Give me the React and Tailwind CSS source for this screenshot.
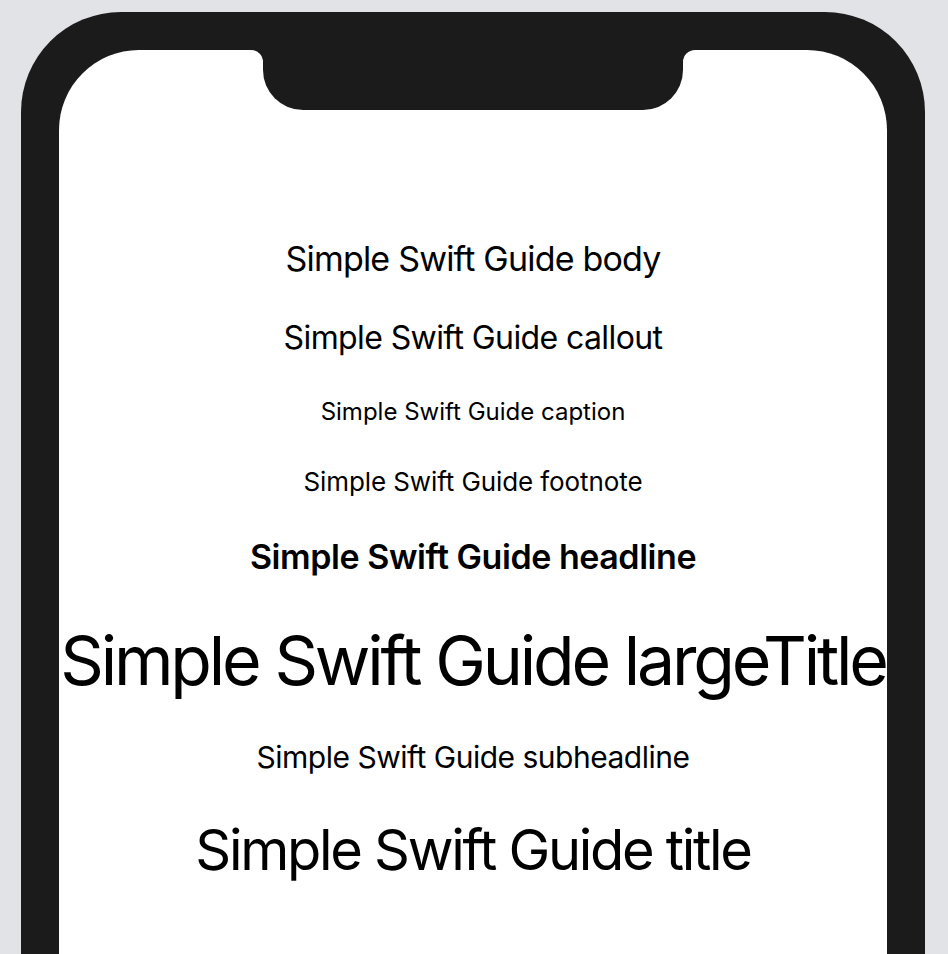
const lines = [
  { text: 'Simple Swift Guide body', cls: 'text-[34px] leading-[44px] mt-[187px] tracking-[-0.8px]' },
  { text: 'Simple Swift Guide callout', cls: 'text-[32px] leading-[42px] mt-[36px] tracking-[-0.6px]' },
  { text: 'Simple Swift Guide caption', cls: 'text-[24px] leading-[32px] mt-[37px]' },
  { text: 'Simple Swift Guide footnote', cls: 'text-[26px] leading-[36px] mt-[36px] tracking-[-0.1px]' },
  { text: 'Simple Swift Guide headline', cls: 'text-[34px] leading-[44px] mt-[35px] font-semibold tracking-[-0.45px]' },
  { text: 'Simple Swift Guide largeTitle', cls: 'text-[68px] leading-[82px] mt-[40px] tracking-[-3.2px]' },
  { text: 'Simple Swift Guide subheadline', cls: 'text-[30px] leading-[40px] mt-[36px] tracking-[-0.5px]' },
  { text: 'Simple Swift Guide title', cls: 'text-[56px] leading-[68px] mt-[39px] tracking-[-2.3px]' },
]

const Notch = () => (
  <div className="absolute top-0 left-[192px] flex">
    {/* left ear */}
    <div className="w-[12px] h-[12px] bg-[#1b1b1b]">
      <div className="w-full h-full bg-white rounded-tr-[12px]" />
    </div>
    <div className="w-[420px] h-[60px] bg-[#1b1b1b] rounded-b-[40px]" />
    {/* right ear */}
    <div className="w-[12px] h-[12px] bg-[#1b1b1b]">
      <div className="w-full h-full bg-white rounded-tl-[12px]" />
    </div>
  </div>
)

export default function App() {
  return (
    <div className="w-full h-[954px] bg-[#e2e3e7] overflow-hidden pt-[12px] pl-[21px]">
      <div className="w-[904px] h-[1100px] bg-[#1b1b1b] rounded-[100px] p-[38px]">
        <div
          className="relative h-full bg-white rounded-[80px] flex flex-col items-center text-black"
          style={{ fontFamily: 'Inter, "Noto Sans", sans-serif' }}
        >
          <Notch />
          {lines.map(l => (
            <div key={l.text} className={`whitespace-nowrap ${l.cls}`}>{l.text}</div>
          ))}
        </div>
      </div>
    </div>
  )
}
